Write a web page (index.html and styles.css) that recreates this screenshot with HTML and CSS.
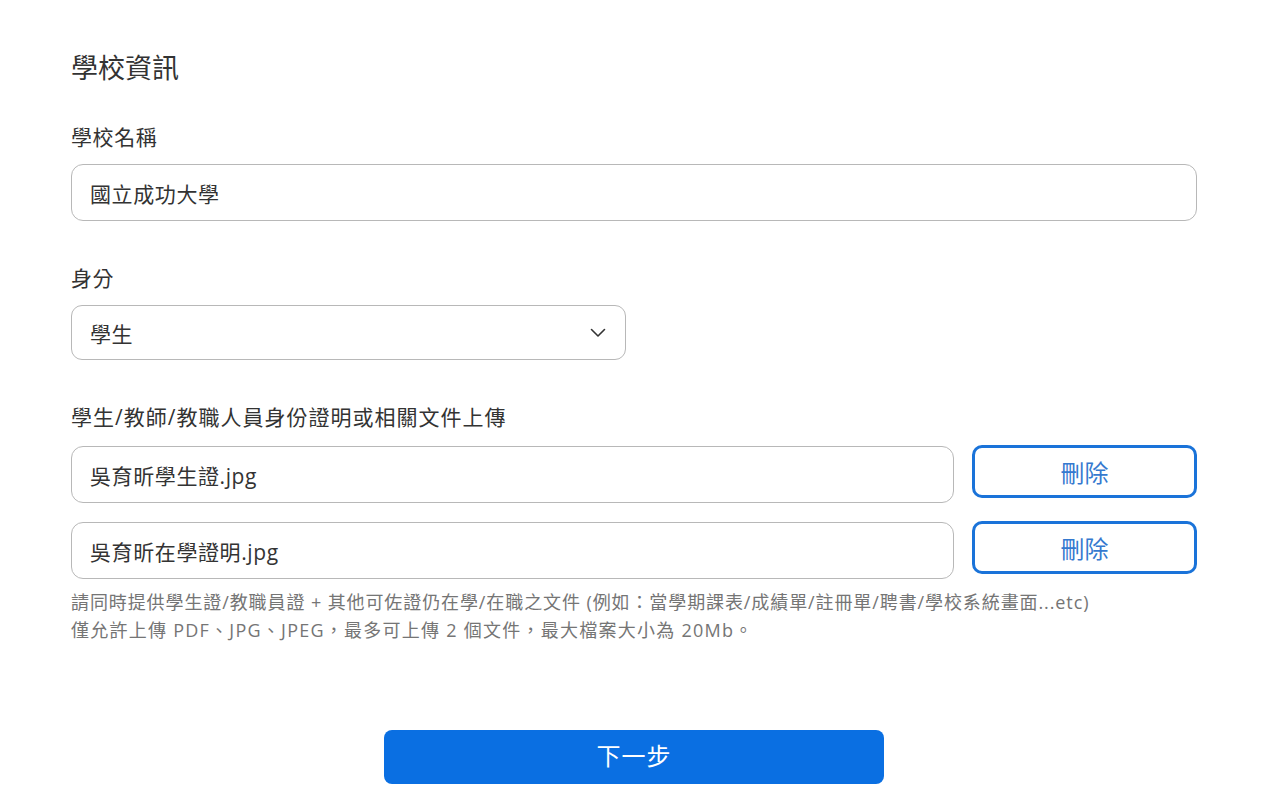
FILE: index.html
```html
<!DOCTYPE html>
<html lang="zh-Hant">
<head>
<meta charset="utf-8">
<link rel="stylesheet" href="styles.css">
</head>
<body>
<main class="page">
  <h1 class="title">學校資訊</h1>

  <div class="field">
    <div class="label">學校名稱</div>
    <div class="input full">國立成功大學</div>
  </div>

  <div class="field">
    <div class="label">身分</div>
    <div class="input select">
      <span>學生</span>
      <svg class="chev" width="16" height="10" viewBox="0 0 16 10"><path d="M1.5 1.5 L8 8 L14.5 1.5" fill="none" stroke="#333" stroke-width="1.6" stroke-linecap="round" stroke-linejoin="round"/></svg>
    </div>
  </div>

  <div class="field">
    <div class="label label-wide">學生/教師/教職人員身份證明或相關文件上傳</div>
    <div class="file-row">
      <div class="input file">吳育昕學生證.jpg</div>
      <button class="del">刪除</button>
    </div>
    <div class="file-row">
      <div class="input file">吳育昕在學證明.jpg</div>
      <button class="del">刪除</button>
    </div>
    <p class="help">請同時提供學生證/教職員證 + 其他可佐證仍在學/在職之文件 (例如：當學期課表/成績單/註冊單/聘書/學校系統畫面...etc)<br><span class="help2">僅允許上傳 PDF、JPG、JPEG，最多可上傳 2 個文件，最大檔案大小為 20Mb。</span></p>
  </div>

  <div class="actions">
    <button class="next">下一步</button>
  </div>
</main>
</body>
</html>
```
FILE: styles.css
```css
* { box-sizing: border-box; }
html, body { margin: 0; padding: 0; background: #fff; }
body {
  font-family: "Open Sans", "Noto Sans CJK TC", sans-serif;
  color: #333;
}
.page {
  width: 1279px;
  padding: 50px 82px 0 71px;
}
.title {
  margin: 0;
  font-size: 27px;
  font-weight: 400;
  line-height: 36px;
  color: #333;
}
.field { margin-top: 36px; }
.field + .field { margin-top: 42px; }
.label {
  font-size: 21px;
  letter-spacing: 0.6px;
  line-height: 30px;
  color: #333;
}
.label-wide { letter-spacing: 1px; }
.input {
  margin-top: 12px;
  border: 1px solid #b8b8b8;
  border-radius: 12px;
  height: 57px;
  padding: 0 18px;
  display: flex;
  align-items: center;
  font-size: 21px;
  letter-spacing: 0.6px;
  color: #333;
}
.select {
  width: 555px;
  height: 55px;
  border-radius: 11px;
  justify-content: space-between;
  padding-right: 19px;
}
.chev { display: block; }
.file-row {
  display: flex;
  gap: 18px;
  align-items: flex-start;
  margin-top: 14px;
}
.file-row + .file-row { margin-top: 19px; }
.file-row .input { margin-top: 0; flex: 1; }
.del {
  width: 225px;
  height: 53px;
  margin-top: -1px;
  border: 3px solid #1a73d9;
  border-radius: 10px;
  background: #fff;
  color: #3579cf;
  font-family: inherit;
  font-size: 24px;
  cursor: pointer;
}
.help {
  margin: 9px 0 0;
  font-size: 18px;
  letter-spacing: 0.9px;
  line-height: 28px;
  color: #757575;
}
.help2 { letter-spacing: 1.25px; }
.actions {
  display: flex;
  justify-content: center;
  margin-top: 86px;
}
.next {
  width: 500px;
  height: 54px;
  border: none;
  border-radius: 8px;
  background: #0a6fe2;
  color: #fff;
  font-family: inherit;
  font-size: 24px;
  line-height: 1;
  letter-spacing: 1px;
  padding-bottom: 3px;
  cursor: pointer;
}
```
